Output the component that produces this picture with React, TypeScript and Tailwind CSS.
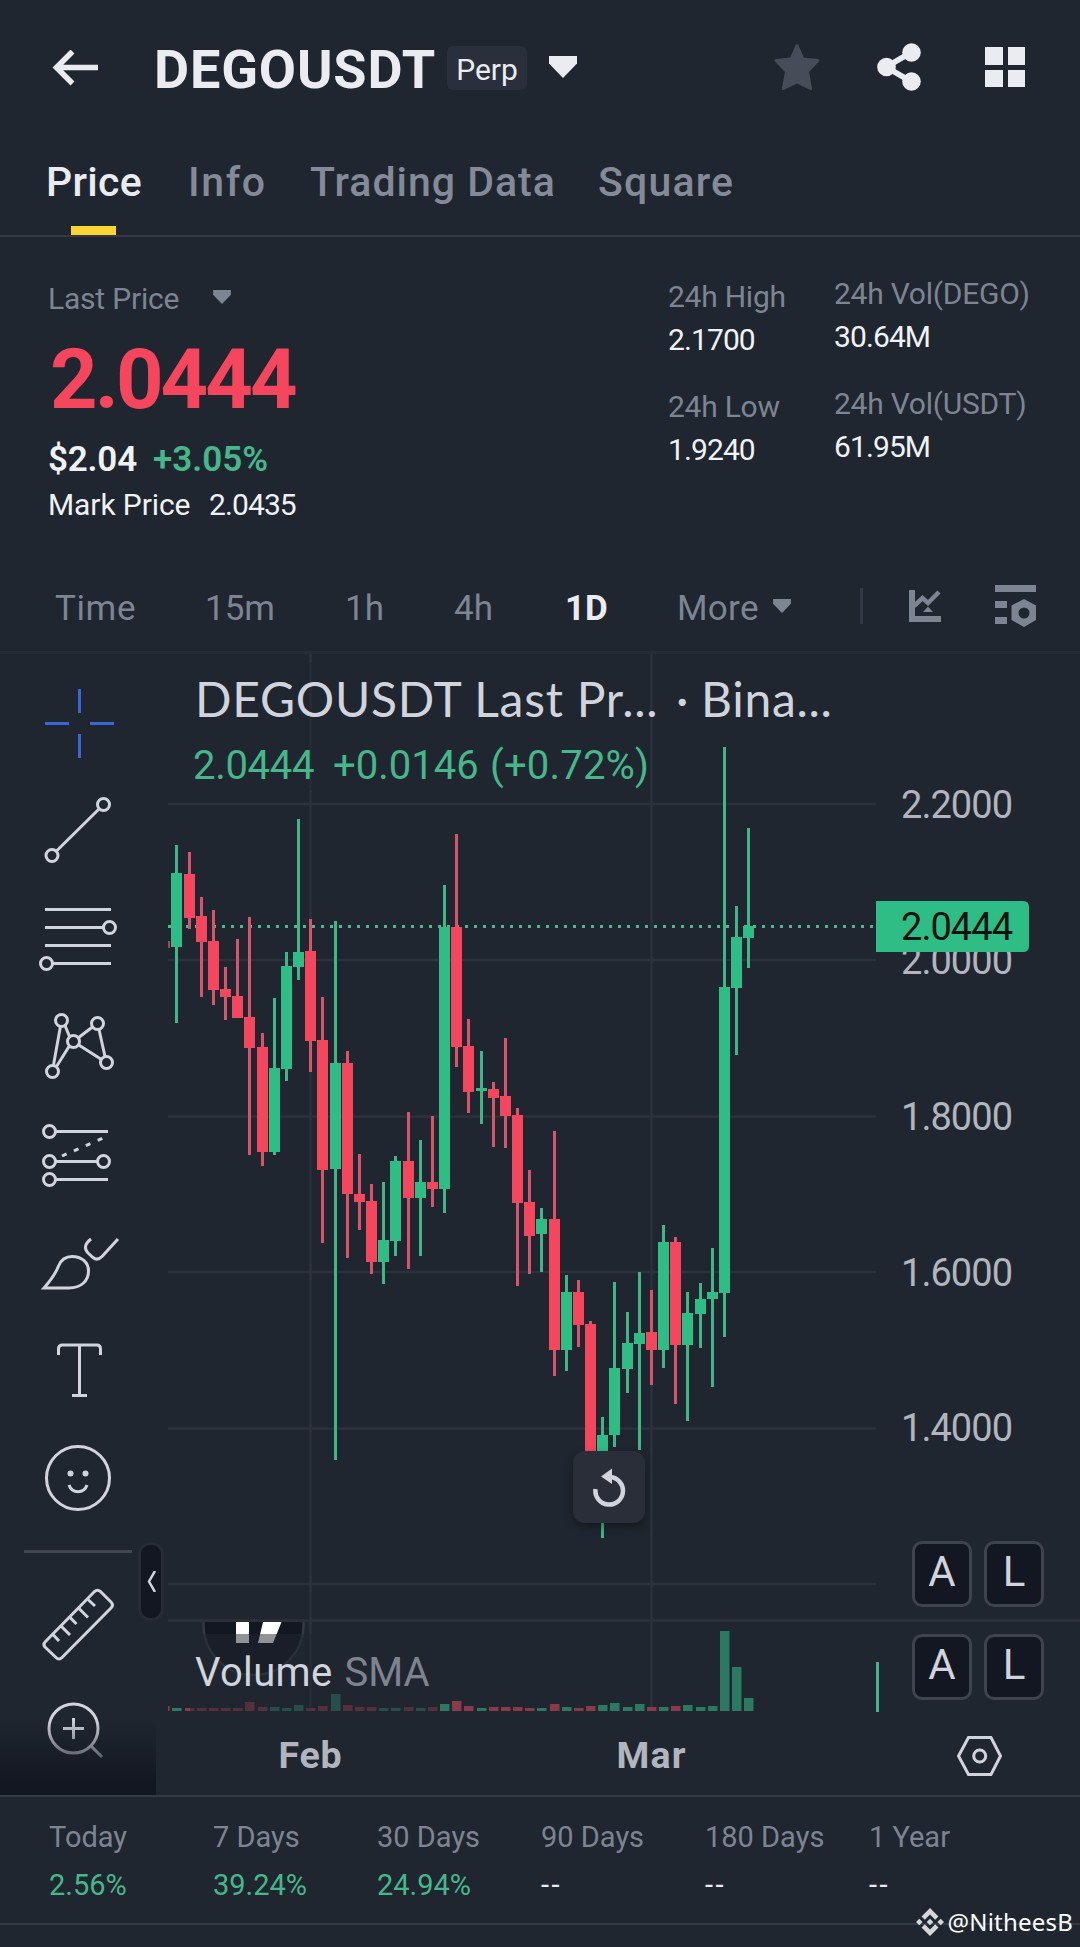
import type { ReactNode } from "react";

const GREEN = "#2ebd85";
const RED = "#f6465d";
const INK = "#d1d4dc";

/* [rising, high, low, bodyTop, bodyBottom, volumeTop] in canvas units */
type Candle = [number, number, number, number, number, number];
const candles: Candle[] = [
  [1, 845, 1023, 873, 947, 1708], [0, 852, 929, 874, 918, 1708], [0, 897, 997, 916, 942, 1708],
  [0, 910, 1005, 941, 990, 1708], [0, 967, 1020, 989, 997, 1708], [0, 939, 1018, 996, 1018, 1708],
  [0, 917, 1155, 1017, 1048, 1702], [0, 1033, 1166, 1047, 1152, 1707], [1, 998, 1155, 1068, 1152, 1707],
  [1, 952, 1081, 966, 1069, 1708], [1, 819, 980, 952, 967, 1705], [0, 919, 1072, 951, 1041, 1708],
  [0, 997, 1243, 1040, 1170, 1706], [1, 921, 1460, 1063, 1169, 1694], [0, 1051, 1258, 1063, 1194, 1705],
  [0, 1154, 1230, 1194, 1202, 1707], [0, 1184, 1274, 1201, 1262, 1707], [1, 1182, 1284, 1240, 1262, 1708],
  [1, 1156, 1256, 1161, 1241, 1708], [0, 1112, 1269, 1161, 1198, 1707], [1, 1140, 1256, 1182, 1198, 1708],
  [0, 1116, 1207, 1182, 1189, 1707], [1, 885, 1213, 927, 1189, 1704], [0, 834, 1067, 927, 1047, 1701],
  [0, 1019, 1113, 1046, 1092, 1706], [1, 1051, 1124, 1088, 1091, 1708], [0, 1082, 1147, 1089, 1098, 1707],
  [0, 1038, 1148, 1096, 1116, 1707], [0, 1108, 1286, 1115, 1203, 1707], [0, 1170, 1274, 1202, 1236, 1708],
  [1, 1208, 1272, 1219, 1234, 1708], [0, 1131, 1376, 1219, 1350, 1704], [1, 1275, 1371, 1292, 1350, 1707],
  [0, 1280, 1347, 1292, 1325, 1708], [0, 1321, 1470, 1324, 1455, 1706], [1, 1417, 1538, 1435, 1455, 1705],
  [1, 1282, 1447, 1368, 1435, 1703], [1, 1312, 1393, 1343, 1369, 1707], [1, 1272, 1450, 1333, 1344, 1704],
  [0, 1290, 1385, 1332, 1350, 1707], [1, 1225, 1368, 1242, 1350, 1707], [0, 1237, 1404, 1242, 1345, 1706],
  [1, 1292, 1421, 1313, 1345, 1705], [1, 1283, 1348, 1299, 1314, 1707], [1, 1248, 1387, 1292, 1299, 1706],
  [1, 747, 1337, 987, 1293, 1631], [1, 906, 1055, 937, 988, 1667], [1, 828, 968, 926, 938, 1698],
];
const candleX = (i: number) => 176.5 + 12 * i + Math.ceil(i / 6);

const gridY = [804, 960, 1116.5, 1272, 1428.5, 1584];
const priceLabels: [string, number][] = [
  ["2.2000", 818], ["2.0000", 974], ["1.8000", 1130], ["1.6000", 1286], ["1.4000", 1441],
];

function Caret({ className }: { className: string }) {
  return (
    <svg viewBox="0 0 28 22" className={className} fill="currentColor">
      <path d="M0 0H28V7.5L14 22L0 7.5Z" />
    </svg>
  );
}

function Header() {
  return (
    <header className="flex h-[134px] items-center pl-[52px] text-[#eaecf2]">
      <svg viewBox="0 0 46 36" className="mt-[2px] h-9 w-[46px]" fill="none" stroke="currentColor" strokeWidth="5.6">
        <path d="M46 17.5H5M20.500 1.500L4.500 17.500L20.500 33.500" />
      </svg>
      <h1 className="ml-[56px] mt-[6px] w-[287px] text-[54px] font-bold leading-[64px] tracking-[0.85px]">DEGOUSDT</h1>
      <span className="ml-[6px] mt-[2px] flex h-[44px] w-20 items-center justify-center rounded-md bg-[#2a303b] pt-[3px] text-[30px]">
        Perp
      </span>
      <Caret className="ml-[22px] h-[22px] w-7" />
      <svg viewBox="0 0 46 48" className="ml-[197px] h-12 w-[46px] text-[#474d58]" fill="currentColor" stroke="currentColor" strokeWidth="3" strokeLinejoin="round">
        <path d="M23 2.500L29 16L44 17.500L33.500 28.500L36.500 45.500L23 39L9.500 45.500L12.500 28.500L2 17.500L17 16Z" />
      </svg>
      <svg viewBox="0 0 44 48" className="ml-[57px] h-12 w-11" fill="currentColor">
        <path d="M34 9.500L9 24L34 38.500" fill="none" stroke="currentColor" strokeWidth="5.500" />
        <circle cx="34.500" cy="9.500" r="9.300" />
        <circle cx="9.500" cy="24" r="9.300" />
        <circle cx="34.500" cy="38.500" r="9.300" />
      </svg>
      <div className="ml-[64px] grid h-[40px] w-10 grid-cols-2 gap-[5px]">
        <i className="bg-[#eaecf2]" />
        <i className="bg-[#eaecf2]" />
        <i className="bg-[#eaecf2]" />
        <i className="bg-[#eaecf2]" />
      </div>
    </header>
  );
}

function Tabs() {
  return (
    <nav className="flex h-[103px] border-b-2 border-[#343a45] pl-[46px] pt-[24px] text-[41px] font-medium leading-[48px] text-[#848a98]">
      <div className="flex w-[142px] flex-col tracking-[0.3px] text-[#eaecf2]">
        Price
        <i className="ml-[25px] mt-auto h-[9px] w-[45px] bg-[#fcd535]" />
      </div>
      <div className="w-[122px] tracking-[1.6px]">Info</div>
      <div className="w-[288px] tracking-[1px]">Trading Data</div>
      <div className="tracking-[1.2px]">Square</div>
    </nav>
  );
}

function Stat({ label, value }: { label: string; value: string }) {
  return (
    <div className="h-[110px] text-[30px] leading-[42px]">
      <div className="whitespace-nowrap tracking-[-0.25px] text-[#7d8492]">{label}</div>
      <div className="pt-px tracking-[-0.9px] text-[#f0f2f7]">{value}</div>
    </div>
  );
}

function Summary() {
  return (
    <section className="flex h-[323px]">
      <div className="w-[668px] pl-[48px]">
        <div className="mt-[40px] flex h-[42px] items-center text-[30px] text-[#7d8492]">
          <span className="w-[165px] tracking-[-0.2px]">Last Price</span>
          <Caret className="-mt-[3px] h-[14px] w-[18px]" />
        </div>
        <div className="ml-[2px] mt-[11px] text-[83px] font-bold leading-[100px] tracking-[-2.9px] text-[#f6465d]">2.0444</div>
        <div className="mt-[7px] flex text-[35px] font-semibold leading-[46px]">
          <span className="w-[105px] tracking-[-0.2px] text-[#f0f2f7]">$2.04</span>
          <span className="text-[#45b78b]">+3.05%</span>
        </div>
        <div className="-mt-px flex text-[30px] leading-[46px] text-[#f0f2f7]">
          <span className="w-[161px] tracking-[-0.1px]">Mark Price</span>
          <span className="tracking-[-0.9px]">2.0435</span>
        </div>
      </div>
      <div className="w-[166px] pt-[39px]">
        <Stat label="24h High" value="2.1700" />
        <Stat label="24h Low" value="1.9240" />
      </div>
      <div className="pt-[36px]">
        <Stat label="24h Vol(DEGO)" value="30.64M" />
        <Stat label="24h Vol(USDT)" value="61.95M" />
      </div>
    </section>
  );
}

function Intervals() {
  return (
    <nav className="flex h-[94px] items-center border-b-[3px] border-[#262c37] pl-[55px] text-[35px] text-[#7d8492]">
      <span className="w-[150px] pt-[7px] tracking-[0.6px]">Time</span>
      <span className="w-[140px] pt-[7px]">15m</span>
      <span className="w-[109px] pt-[7px]">1h</span>
      <span className="w-[111px] pt-[7px]">4h</span>
      <span className="w-[112px] pt-[7px] font-bold text-[#eaecf2]">1D</span>
      <span className="w-[96px] pt-[7px] tracking-[0.3px]">More</span>
      <Caret className="h-[14px] w-[18px]" />
      <i className="ml-[69px] h-9 w-[3px] bg-[#343a45]" />
      <svg viewBox="0 0 32 32" className="ml-[46px] h-8 w-8" fill="none" stroke="currentColor" strokeWidth="6">
        <path d="M3 0V29H32" />
        <path d="M5 16L13.500 8L19 13L30 2" strokeWidth="4.500" />
        <path d="M14 22L19 16.500L24 22Z" fill="currentColor" stroke="none" />
      </svg>
      <svg viewBox="0 0 42 42" className="ml-[54px] h-[42px] w-[42px]" fill="currentColor">
        <path d="M0 0H41V7H0ZM0 16H12V23H0ZM0 32H12V39H0Z" />
        <path fillRule="evenodd" d="M29 14L41 20.500V35L29 42L16.500 35V20.500ZM29 22.500A5.500 5.500 0 1 0 29 33.500A5.500 5.500 0 1 0 29 22.500Z" />
      </svg>
    </nav>
  );
}

function Tool({ top, height, children }: { top: number; height: number; children: ReactNode }) {
  return (
    <svg viewBox={`0 ${top} 156 ${height}`} className="block w-[156px] shrink-0" fill="none" stroke={INK} strokeWidth="3">
      {children}
    </svg>
  );
}

function Toolbar() {
  return (
    <aside className="relative flex w-[156px] shrink-0 flex-col">
      <Tool top={654} height={126}>
        <path d="M79.500 689V713M79.500 734V758M45 723.500H69M90 723.500H114" stroke="#3b66d6" />
      </Tool>
      <Tool top={780} height={100}>
        <path d="M56.500 851L99 809" />
        <circle cx="52" cy="855.500" r="6" />
        <circle cx="103.500" cy="804.500" r="6" />
      </Tool>
      <Tool top={880} height={110}>
        <path d="M45 909.500H111M45 927.500H103M45 945.500H111M53 963.500H111" />
        <circle cx="109.500" cy="927.500" r="6" />
        <circle cx="46.500" cy="963.500" r="6" />
      </Tool>
      <Tool top={990} height={110}>
        <path d="M60.500 1026L53.500 1065M65 1025.500L69.500 1036.500M69 1046.500L56.500 1066.500M78 1038L92.500 1027M99 1029.500L105 1056.500M78 1044.500L101.500 1059.500" />
        <circle cx="61.500" cy="1020.500" r="6" />
        <circle cx="97.500" cy="1023.500" r="6" />
        <circle cx="73.500" cy="1041.500" r="6" />
        <circle cx="106.500" cy="1062.500" r="6" />
        <circle cx="52.500" cy="1071.500" r="6" />
      </Tool>
      <Tool top={1100} height={110}>
        <path d="M56 1131.500H108M56 1161.500H97M56 1179.500H108" />
        <path d="M62 1156L103 1138" strokeDasharray="5 8" />
        <circle cx="49.500" cy="1131.500" r="6" />
        <circle cx="49.500" cy="1161.500" r="6" />
        <circle cx="103.500" cy="1161.500" r="6" />
        <circle cx="49.500" cy="1179.500" r="6" />
      </Tool>
      <Tool top={1210} height={105}>
        <path d="M44 1288H69C81 1288 88.500 1281 88.500 1271C88.500 1262 81.500 1256.500 72 1256.500C65 1256.500 61 1260 58.500 1266C55.500 1274 51 1280 44 1288Z" />
        <path d="M91 1239C84.500 1244 84 1249 88 1253L93 1257.500C96 1260 99 1259.500 102 1256.500L118 1239" />
      </Tool>
      <Tool top={1315} height={110}>
        <path d="M58.500 1355V1349C58.500 1346 60 1345 62.500 1345H97C99.500 1345 100.500 1346 100.500 1349V1355M79.500 1345V1395.500M72 1395.500H87" />
      </Tool>
      <Tool top={1425} height={125}>
        <circle cx="78" cy="1478" r="31.500" />
        <circle cx="70.500" cy="1473.500" r="3" fill={INK} stroke="none" />
        <circle cx="85.500" cy="1473.500" r="3" fill={INK} stroke="none" />
        <path d="M69 1485C72 1494 84 1494 87 1485" />
      </Tool>
      <i className="ml-[24px] h-[3px] w-[108px] bg-[#434651]" />
      <Tool top={1553} height={129}>
        <path d="M94.500 1591.500Q97.500 1589 100.500 1591.500L111 1602Q114 1605 111 1608L62 1657.500Q59 1660.500 56 1657.500L45.500 1647.500Q42.500 1644.500 45.500 1641.500Z" />
        <path d="M52.500 1634L59 1641M61 1626L70 1635M70 1617.500L76.500 1624M79 1608.500L88 1617.500M88 1599.500L95 1606" />
      </Tool>
      <Tool top={1682} height={113}>
        <circle cx="73.500" cy="1728.500" r="24.500" />
        <path d="M63 1728.500H84M73.500 1718V1739M91 1746L102 1757" />
      </Tool>
      <div className="absolute inset-x-0 bottom-0 h-[76px] bg-linear-to-b from-transparent to-[#131722] to-85%" />
      <div className="absolute left-[138px] top-[888px] flex h-[79px] w-[26px] items-center justify-center rounded-xl border-[3px] border-[#262b36] bg-[#131722]">
        <svg viewBox="0 0 9 21" className="h-[21px] w-[9px]" fill="none" stroke={INK} strokeWidth="2.500">
          <path d="M8 0L2 10.500L8 21" />
        </svg>
      </div>
    </aside>
  );
}

function ScaleButton({ children }: { children: ReactNode }) {
  return (
    <span className="flex h-[66px] w-[60px] items-center justify-center rounded-[10px] border-[3px] border-[#3f434e] bg-[#131722] pb-[6px] text-[42px] text-[#d1d4dc]">
      {children}
    </span>
  );
}

function ChartCanvas() {
  return (
    <svg viewBox="156 654 924 1141" className="block h-[1141px] w-[924px]" fontFamily="Roboto, sans-serif">
      <g stroke="#2c313c" strokeWidth="2.500">
        {gridY.map((y) => (
          <path key={y} d={`M168 ${y}H876`} />
        ))}
        <path d="M310.500 654V1711M651.500 654V1711" />
        <path d="M168 1620.500H1080" />
      </g>
      <path d="M190 662H440V790H190Z" fill="#1f262f" opacity=".5" />

      <path d="M168 926.500H876" stroke="#4fb892" strokeWidth="3" strokeDasharray="3 6" />
      <path d="M168 941H170V948H168Z" fill={RED} opacity=".7" />
      {candles.map(([up, high, low, top, bottom], i) => (
        <g key={i} fill={up ? GREEN : RED}>
          <rect x={candleX(i) - 1.5} y={high} width="3" height={low - high} fill={up ? "#3fb588" : "#d9546a"} />
          <rect x={candleX(i) - 5.5} y={top} width="11" height={bottom - top} />
        </g>
      ))}

      <path d="M203.500 1622V1625A50 50 0 0 0 303.500 1625V1622Z" fill="#131722" />
      <path d="M203.500 1622V1625A50 50 0 0 0 303.500 1625V1622" fill="none" stroke="#343944" strokeWidth="2.500" />
      <path d="M236 1622H249V1643H236ZM263 1622H281.500L273 1643H258Z" fill="#fff" />
      <path d="M168 1706H169.500V1711H168Z" fill="#8b3a48" />
      {candles.map(([up, , , , , top], i) => (
        <rect key={i} x={candleX(i) - 4.5} y={top} width="9.500" height={1711 - top} fill={up ? "#2a7960" : "#8b3a48"} />
      ))}
      <path d="M190 1634H440V1711H190Z" fill="#1f262f" opacity=".5" />
      <path d="M877.500 1662V1712" stroke="#3fb588" strokeWidth="3" />

      <g fill="#b2b5be" fontSize="38">
        {priceLabels.map(([label, y]) => (
          <text key={label} x="901" y={y} textLength="112">{label}</text>
        ))}
      </g>
      <path d="M876 901H1023Q1029 901 1029 907V946Q1029 952 1023 952H876Z" fill={GREEN} />
      <text x="901" y="940" fontSize="38" textLength="112" fill="#0b1210">2.0444</text>

      <g fill="#b2b5be" fontSize="37.500" fontWeight="700" textAnchor="middle">
        <text x="310" y="1768" textLength="63">Feb</text>
        <text x="651" y="1768" textLength="69">Mar</text>
      </g>
      <g fill="none" stroke={INK} strokeWidth="3">
        <path d="M968.500 1737.500H991L1000.500 1756L991 1774.500H968.500L958.500 1756Z" />
        <circle cx="979.700" cy="1756" r="6" />
      </g>
    </svg>
  );
}

function Chart() {
  return (
    <div className="relative h-[1141px] w-[924px] shrink-0">
      <ChartCanvas />
      <div className="absolute left-[39px] top-[15px] flex whitespace-pre font-['Lato'] text-[48px] leading-[60px] text-[#d1d4dc]">
        <span className="w-[481px] tracking-[0.75px]">DEGOUSDT Last Pr...</span>
        <span className="w-[25px]">·</span>
        <span className="tracking-[0.7px]">Bina...</span>
      </div>
      <div className="absolute left-[37px] top-[87px] flex text-[40px] leading-[50px] text-[#45b78b]">
        <span className="w-[140px] tracking-[-0.3px]">2.0444</span>
        <span className="w-[157px]">+0.0146</span>
        <span className="tracking-[0.2px]">(+0.72%)</span>
      </div>
      <div className="absolute left-[417px] top-[797px] flex size-[72px] items-center justify-center rounded-xl bg-[#2a2e39] shadow-[0_4px_10px_rgba(0,0,0,0.35)]">
        <svg viewBox="591 1467 36 40" className="h-10 w-9" fill="none">
          <path d="M595.500 1489A13.800 13.800 0 1 0 610 1477" stroke={INK} strokeWidth="4.500" />
          <path d="M601 1476.500L612 1468.500V1484Z" fill={INK} />
        </svg>
      </div>
      <div className="absolute left-[756px] top-[887px] flex gap-3">
        <ScaleButton>A</ScaleButton>
        <ScaleButton>L</ScaleButton>
      </div>
      <div className="absolute left-[756px] top-[980px] flex gap-3">
        <ScaleButton>A</ScaleButton>
        <ScaleButton>L</ScaleButton>
      </div>
      <div className="absolute left-[39px] top-[994px] flex gap-3 text-[40px] leading-[50px] text-[#d1d4dc]">
        <span className="tracking-[0.35px]">Volume</span>
        <span className="text-[#7f838f]">SMA</span>
      </div>
    </div>
  );
}

const periods = [
  { label: "Today", value: "2.56%" },
  { label: "7 Days", value: "39.24%" },
  { label: "30 Days", value: "24.94%" },
  { label: "90 Days", value: "--" },
  { label: "180 Days", value: "--" },
  { label: "1 Year", value: "--" },
];

function Performance() {
  return (
    <section className="flex h-[130px] border-y-2 border-[#343a45] pl-[49px] pt-[16px] text-[29px] leading-[48px]">
      {periods.map(({ label, value }) => (
        <div key={label} className="w-[164px] shrink-0">
          <div className="text-[#7d8492]">{label}</div>
          <div className={value === "--" ? "tracking-[2.5px] text-[#eaecf2]" : "text-[#45b78b]"}>{value}</div>
        </div>
      ))}
    </section>
  );
}

function Watermark() {
  return (
    <div className="absolute right-[7px] top-[1905px] flex items-center gap-1 font-['Noto_Sans'] text-[24px] leading-[34px] tracking-[0.2px] text-white">
      <svg viewBox="0 0 28 28" className="size-7" fill="#d5d7db">
        <path d="M14 0L22.500 8.500L19.200 11.800L14 6.600L8.800 11.800L5.500 8.500ZM14 28L22.500 19.500L19.200 16.200L14 21.400L8.800 16.200L5.500 19.500ZM14 10.700L17.300 14L14 17.300L10.700 14ZM3.300 10.700L6.600 14L3.300 17.300L0 14ZM24.700 10.700L28 14L24.700 17.300L21.400 14Z" />
      </svg>
      @NitheesB
    </div>
  );
}

export default function App() {
  return (
    <main className="relative h-[1947px] w-[1080px] overflow-hidden bg-[#1f262f] font-['Roboto',sans-serif]">
      <Header />
      <Tabs />
      <Summary />
      <Intervals />
      <div className="flex h-[1141px]">
        <Toolbar />
        <Chart />
      </div>
      <Performance />
      <Watermark />
    </main>
  );
}
